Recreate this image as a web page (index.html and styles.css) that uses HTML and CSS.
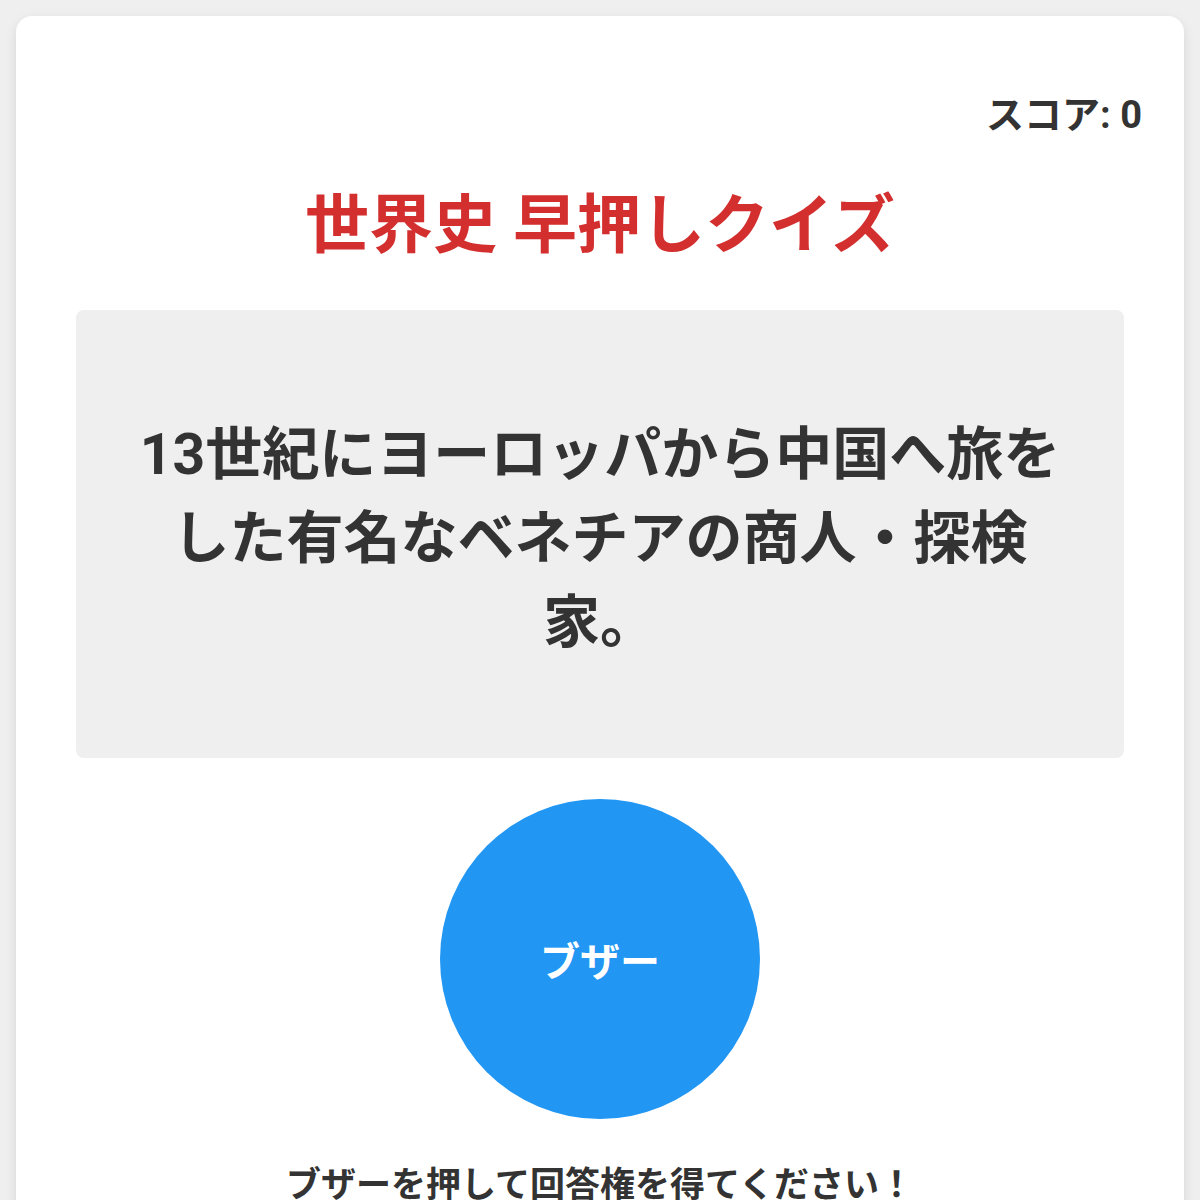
FILE: index.html
```html
<!DOCTYPE html>
<html lang="ja">
<head>
  <meta charset="utf-8" />
  <meta name="viewport" content="width=device-width, initial-scale=1" />
  <title>世界史 早押しクイズ</title>
  <link rel="stylesheet" href="styles.css">
</head>
<body>
  <div class="quiz-card">
    <div class="score">スコア: <span id="score">0</span></div>
    <h1>世界史 早押しクイズ</h1>
    <div class="question-box">
      <p id="question">13世紀にヨーロッパから中国へ旅をした有名なベネチアの商人・探検家。</p>
    </div>
    <div class="buzzer-area">
      <button class="buzzer" id="buzzer">ブザー</button>
    </div>
    <p class="message" id="message">ブザーを押して回答権を得てください！</p>
  </div>
</body>
</html>
```

FILE: styles.css
```css
body {
  font-family: Roboto, "Noto Sans CJK JP", sans-serif;
  margin: 0;
  padding: 16px;
  background-color: #efefef;
  color: #333;
}
.quiz-card {
  background-color: #fff;
  border-radius: 16px;
  box-shadow: 0 4px 12px rgba(0, 0, 0, 0.1);
  padding: 76px 42px 40px;
  min-height: 1200px;
}
.score {
  text-align: right;
  font-size: 38px;
  font-weight: bold;
  line-height: 46px;
}
h1 {
  text-align: center;
  color: #d32f2f;
  font-size: 64px;
  line-height: 77px;
  margin: 49px 0 46px;
}
.question-box {
  background-color: #efefef;
  border-radius: 8px;
  margin: 0 18px;
  padding: 103px 60px 93px;
}
.question-box p {
  margin: 0;
  text-align: center;
  font-size: 57px;
  font-weight: bold;
  line-height: 84px;
}
.buzzer-area {
  display: flex;
  justify-content: center;
  margin-top: 41px;
}
.buzzer {
  width: 320px;
  height: 320px;
  border-radius: 50%;
  border: none;
  background-color: #2196f3;
  color: #fff;
  font-family: inherit;
  font-size: 40px;
  font-weight: bold;
  cursor: pointer;
}
.message {
  text-align: center;
  font-size: 35px;
  font-weight: bold;
  line-height: 52px;
  margin: 41px 0 0;
}
```
